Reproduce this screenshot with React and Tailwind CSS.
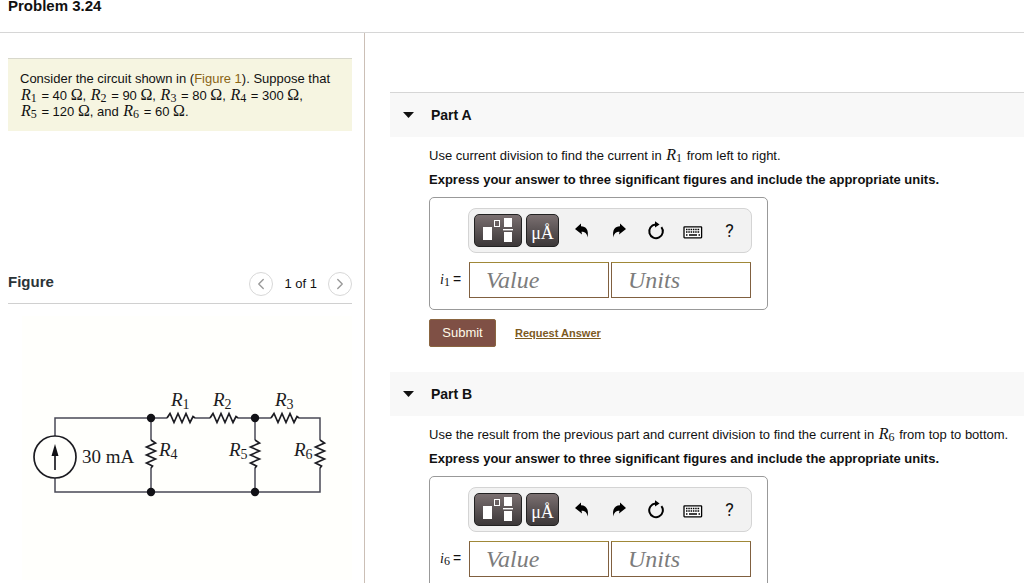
import { useState } from 'react';
import { ChevronLeft, ChevronRight } from 'lucide-react';

const PARTS = [
  {
    key: 'a',
    title: 'Part A',
    before: 'Use current division to find the current in ',
    sub: '1',
    after: ' from left to right.',
  },
  {
    key: 'b',
    title: 'Part B',
    before: 'Use the result from the previous part and current division to find the current in ',
    sub: '6',
    after: ' from top to bottom.',
  },
];

// Zigzag for a horizontal resistor, 28px long, centred on y = 0
const ZIGZAG = 'M0 0 L3 -4.5 L7 4.5 L11 -4.5 L15 4.5 L19 -4.5 L23 4.5 L26 -1.5 L28 0';

function Res({ n }) {
  return (
    <span className="mx-px whitespace-nowrap font-['Liberation_Serif',serif] text-base leading-none">
      <i>R</i>
      <span className="align-[-2px] text-xs leading-none">{n}</span>
    </span>
  );
}

function Ohm() {
  return <span className="font-['Liberation_Serif',serif] text-base leading-none">Ω</span>;
}

function CircuitLabel({ x, y, n }) {
  return (
    <text x={x} y={y} fontSize="19" fontStyle="italic">
      R
      <tspan fontSize="14" fontStyle="normal" dy="3">{n}</tspan>
    </text>
  );
}

function Circuit() {
  return (
    <svg
      viewBox="0 0 328 200"
      width="328"
      height="200"
      role="img"
      aria-label="Circuit with a 30 mA source and six resistors"
      className="block font-['Liberation_Serif',serif]"
    >
      <g fill="none" stroke="#4a4a55" strokeWidth="1.5">
        <path d="M33 120 V102 H145 M173 102 H188 M216 102 H249 M277 102 H298 V124 M298 152 V176 H33 V162" />
        <path d="M129 102 V124 M129 152 V176 M233 102 V124 M233 152 V176" />
      </g>
      <g fill="none" stroke="#1c1c22" strokeWidth="1.7">
        <path d={ZIGZAG} transform="translate(145 102)" />
        <path d={ZIGZAG} transform="translate(188 102)" />
        <path d={ZIGZAG} transform="translate(249 102)" />
        <path d={ZIGZAG} transform="translate(129 124) rotate(90)" />
        <path d={ZIGZAG} transform="translate(233 124) rotate(90)" />
        <path d={ZIGZAG} transform="translate(298 124) rotate(90)" />
        <circle cx="33" cy="141" r="21" />
        <path d="M33 154 V136" />
      </g>
      <g fill="#111116">
        <path d="M33 128 L36.5 140 H29.5 Z" />
        <circle cx="129" cy="102" r="4.2" />
        <circle cx="233" cy="102" r="4.2" />
        <circle cx="129" cy="176" r="4.2" />
        <circle cx="233" cy="176" r="4.2" />
      </g>
      <g fill="#1c1c22">
        <text x="60" y="147" fontSize="19">30 mA</text>
        <CircuitLabel x={149} y={90} n="1" />
        <CircuitLabel x={191} y={90} n="2" />
        <CircuitLabel x={253} y={90} n="3" />
        <CircuitLabel x={137} y={140} n="4" />
        <CircuitLabel x={207} y={140} n="5" />
        <CircuitLabel x={272} y={140} n="6" />
      </g>
    </svg>
  );
}

function TemplateIcon() {
  return (
    <svg width="30" height="26" viewBox="0 0 30 26" fill="#fff">
      <rect x="0" y="9" width="9" height="13" />
      <rect x="11.5" y="2.5" width="5" height="6" fill="none" stroke="#fff" />
      <rect x="21" y="0" width="8" height="9" />
      <rect x="20" y="11" width="10" height="1.4" />
      <rect x="21" y="14" width="8" height="10" />
    </svg>
  );
}

const ARROW = 'M0 6 L6 0.5 V3.3 C11 3.3 14 7 12.6 14.5 C12 10.5 10 8.8 6.5 8.8 L7 11.5 Z';

function UndoIcon() {
  return (
    <svg width="14" height="15" viewBox="0 0 14 15">
      <path d={ARROW} />
    </svg>
  );
}

function RedoIcon() {
  return (
    <svg width="14" height="15" viewBox="0 0 14 15">
      <path d={ARROW} transform="translate(14 0) scale(-1 1)" />
    </svg>
  );
}

function ResetIcon() {
  return (
    <svg width="18" height="20" viewBox="0 0 18 20">
      <path d="M14.4 6.2 A6.8 6.8 0 1 1 8.4 3.6" fill="none" stroke="#000" strokeWidth="2" />
      <path d="M8 0.3 L12.6 3.4 L8 6.6 Z" />
    </svg>
  );
}

function KeyboardIcon() {
  return (
    <svg width="20" height="16" viewBox="0 0 20 16">
      <rect x="1" y="3.8" width="17.6" height="11" rx="0.5" fill="#fff" stroke="#000" strokeWidth="1.3" />
      <path d="M3 6.4 H17 M3 9 H17" stroke="#000" strokeWidth="1.5" strokeDasharray="1.5 0.8" />
      <path d="M3 12 H4.5 M6 12 H14 M15.5 12 H17" stroke="#000" strokeWidth="1.5" />
    </svg>
  );
}

function ToolButton({ label, children }) {
  return (
    <button type="button" aria-label={label} className="flex h-8 w-[37px] items-center justify-center">
      {children}
    </button>
  );
}

function AnswerBox({ id, sub }) {
  const [value, setValue] = useState('');
  const [units, setUnits] = useState('');
  const field =
    "h-9 w-[140px] border border-[#806040] border-t-[#a08838] bg-white pl-4 font-['Liberation_Serif',serif] text-2xl italic placeholder:text-[#7c7c7c] focus:outline-none";
  const dark =
    'flex h-[33px] items-center justify-center rounded-[5px] border border-[#222] bg-linear-to-b from-[#7b7071] to-[#3c3839] text-white';

  return (
    <div className="w-[339px] rounded-[5px] border border-[#999] pt-[10px] pr-[15px] pb-[11px]">
      <div className="ml-[38px] flex h-[45px] items-center rounded-lg border border-[#d4d4d4] bg-[#f2f2f2] pl-[5px]">
        <button type="button" aria-label="Templates" className={`${dark} w-12`}>
          <TemplateIcon />
        </button>
        <button
          type="button"
          aria-label="Symbols"
          className={`${dark} mx-1 w-[33px] pt-1 font-['Liberation_Serif',serif] text-lg leading-none`}
        >
          μÅ
        </button>
        <ToolButton label="Undo"><UndoIcon /></ToolButton>
        <ToolButton label="Redo"><RedoIcon /></ToolButton>
        <ToolButton label="Reset"><ResetIcon /></ToolButton>
        <ToolButton label="Keyboard shortcuts"><KeyboardIcon /></ToolButton>
        <ToolButton label="Help"><span className="font-[Roboto,sans-serif] text-lg">?</span></ToolButton>
      </div>
      <div className="mt-[9px] flex items-center">
        <label htmlFor={`${id}-value`} className="w-[39px] shrink-0 pl-[10px] font-['Liberation_Serif',serif] text-sm leading-none">
          <i>i</i>
          <span className="align-[-2px] text-xs leading-none">{sub}</span>
          <span className="ml-[3px] font-['Liberation_Sans',sans-serif]">=</span>
        </label>
        <input
          id={`${id}-value`}
          className={field}
          placeholder="Value"
          value={value}
          onChange={(e) => setValue(e.target.value)}
        />
        <input
          aria-label="Units"
          className={`${field} ml-[2px]`}
          placeholder="Units"
          value={units}
          onChange={(e) => setUnits(e.target.value)}
        />
      </div>
    </div>
  );
}

function Part({ part, first }) {
  const [open, setOpen] = useState(true);

  return (
    <section>
      <h2 className={first ? 'border-t border-[#d6d6d6]' : ''}>
        <button
          type="button"
          aria-expanded={open}
          onClick={() => setOpen(!open)}
          className="flex h-11 w-full items-center bg-[#f8f8f8] pl-[13px] text-left text-sm font-bold"
        >
          <svg width="11" height="6" viewBox="0 0 11 6" className="mr-[17px]">
            <path d="M0 0 H11 L5.5 6 Z" fill="#111" />
          </svg>
          {part.title}
        </button>
      </h2>
      {open && (
        <div className="pt-[10px] pb-[25px] pl-[39px]">
          <p className="h-4 leading-4">
            {part.before}
            <Res n={part.sub} />
            {part.after}
          </p>
          <p className="mt-[9px] mb-[9px] leading-4 font-bold">
            Express your answer to three significant figures and include the appropriate units.
          </p>
          <AnswerBox id={part.key} sub={part.sub} />
          <div className="mt-[9px] flex items-center">
            <button type="button" className="h-7 w-[67px] rounded-[2px] border border-[#8a6540] bg-[#7f5045] text-[13px] text-[#fffbe8]">
              Submit
            </button>
            <a href="#request" className="ml-[19px] text-[11px] font-bold text-[#7d5a1e] underline">
              Request Answer
            </a>
          </div>
        </div>
      )}
    </section>
  );
}

export default function App() {
  const pager = 'flex size-6 items-center justify-center rounded-full border border-[#d8d8d8] text-[#999]';

  return (
    <div className="flex h-screen flex-col overflow-hidden bg-white font-['Liberation_Sans',sans-serif] text-[13px] text-[#111]">
      <header className="h-[33px] shrink-0 border-b border-[#d6d6d6] pl-2">
        <h1 className="text-[15px] leading-3 font-bold">Problem 3.24</h1>
      </header>

      <main className="flex min-h-0 flex-1">
        <aside className="w-[365px] shrink-0 overflow-hidden border-r border-[#cbbfb6] pt-[25px] pr-3 pl-2">
          <div className="border-t border-[#d8d8cc] bg-[#f6f5e1] px-3 pt-3 pb-3 leading-4">
            <p className="h-4 whitespace-nowrap">
              Consider the circuit shown in (<a href="#figure" className="text-[#8a6414]">Figure 1</a>). Suppose that
            </p>
            <p className="h-4 whitespace-nowrap">
              <Res n="1" /> = 40 <Ohm />, <Res n="2" /> = 90 <Ohm />, <Res n="3" /> = 80 <Ohm />, <Res n="4" /> = 300 <Ohm />,
            </p>
            <p className="h-4 whitespace-nowrap">
              <Res n="5" /> = 120 <Ohm />, and <Res n="6" /> = 60 <Ohm />.
            </p>
          </div>

          <section id="figure" className="mt-[137px]">
            <div className="flex items-start border-b border-[#d0d0d0] pt-1 pb-[7px]">
              <h2 className="mr-auto text-[15px] leading-5 font-bold text-[#2c3438]">Figure</h2>
              <button type="button" aria-label="Previous figure" className={pager}>
                <ChevronLeft size={18} strokeWidth={1.8} />
              </button>
              <span className="px-[11px] leading-6">1 of 1</span>
              <button type="button" aria-label="Next figure" className={pager}>
                <ChevronRight size={18} strokeWidth={1.8} />
              </button>
            </div>
            <div className="mt-3 ml-[14px] bg-[#fffffc] pb-16">
              <Circuit />
            </div>
          </section>
        </aside>

        <div className="min-w-0 flex-1 overflow-hidden pt-[59px] pl-[25px]">
          {PARTS.map((p, i) => (
            <Part key={p.key} part={p} first={i === 0} />
          ))}
        </div>
      </main>
    </div>
  );
}
